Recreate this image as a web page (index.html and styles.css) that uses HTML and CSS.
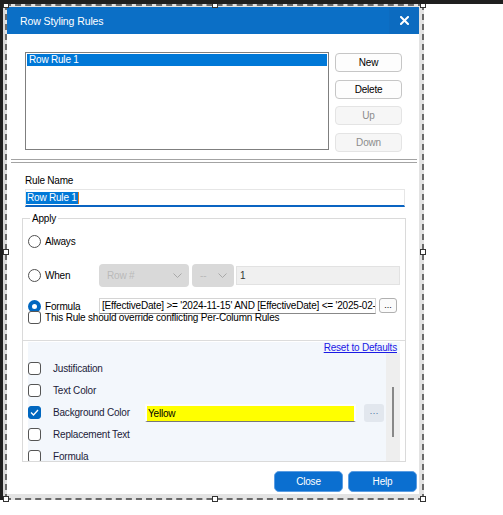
FILE: index.html
```html
<!DOCTYPE html>
<html>
<head>
<meta charset="utf-8">
<link rel="stylesheet" href="styles.css">
</head>
<body>
<div class="screen">
  <div class="stage">
    <div class="leftbar"></div>
    <div class="selection">
      <span class="handle h-tl"></span><span class="handle h-tm"></span><span class="handle h-tr"></span>
      <span class="handle h-ml"></span><span class="handle h-mr"></span>
      <span class="handle h-bl"></span><span class="handle h-bm"></span><span class="handle h-br"></span>
      <div class="dialog">
        <div class="titlebar">
          <span class="title">Row Styling Rules</span>
          <span class="close"><svg width="9" height="9" viewBox="0 0 9 9"><path d="M1 1 L8 8 M8 1 L1 8" stroke="#fff" stroke-width="2" stroke-linecap="square"/></svg></span>
        </div>
        <div class="body">
          <div class="rules-row">
            <div class="listbox"><div class="list-item selected">Row Rule 1</div></div>
            <div class="btn-col">
              <button class="btn">New</button>
              <button class="btn">Delete</button>
              <button class="btn disabled">Up</button>
              <button class="btn disabled">Down</button>
            </div>
          </div>
          <div class="sep"></div>
          <div class="field-label">Rule Name</div>
          <div class="name-input"><span class="sel-text">Row Rule 1</span><span class="caret"></span></div>
          <div class="group">
            <span class="legend">Apply</span>
            <div class="opt row-always"><span class="radio"></span><span class="opt-text">Always</span></div>
            <div class="opt row-when">
              <span class="radio"></span><span class="opt-label">When</span>
              <div class="combo wide"><span>Row #</span><svg width="9" height="5" viewBox="0 0 9 5"><path d="M0.5 0.5 L4.5 4.5 L8.5 0.5" fill="none" stroke="#a9a9a9" stroke-width="1"/></svg></div>
              <div class="combo narrow"><span>--</span><svg width="9" height="5" viewBox="0 0 9 5"><path d="M0.5 0.5 L4.5 4.5 L8.5 0.5" fill="none" stroke="#a9a9a9" stroke-width="1"/></svg></div>
              <div class="value-input">1</div>
            </div>
            <div class="opt row-formula">
              <span class="radio checked"></span><span class="opt-label">Formula</span>
              <div class="formula-input">[EffectiveDate] &gt;= '2024-11-15' AND [EffectiveDate] &lt;= '2025-02-28'</div>
              <button class="mini-btn">...</button>
            </div>
            <div class="opt row-override"><span class="check"></span><span class="opt-text">This Rule should override conflicting Per-Column Rules</span></div>
            <div class="panel">
              <div class="panel-bg">
                <div class="panel-head"><a class="reset">Reset to Defaults</a></div>
                <div class="panel-main">
                  <div class="items">
                    <div class="item"><span class="check"></span><span class="item-label">Justification</span></div>
                    <div class="item"><span class="check"></span><span class="item-label">Text Color</span></div>
                    <div class="item"><span class="check checked"><svg width="9" height="7" viewBox="0 0 9 7"><path d="M1 3.5 L3.5 6 L8 1" fill="none" stroke="#fff" stroke-width="1.3"/></svg></span><span class="item-label">Background Color</span><div class="color-input">Yellow</div><button class="dots">···</button></div>
                    <div class="item"><span class="check"></span><span class="item-label">Replacement Text</span></div>
                    <div class="item"><span class="check"></span><span class="item-label">Formula</span></div>
                  </div>
                  <div class="scrollbar"><div class="thumb"></div></div>
                </div>
              </div>
            </div>
          </div>
          <div class="footer">
            <button class="primary">Close</button>
            <button class="primary">Help</button>
          </div>
        </div>
      </div>
    </div>
  </div>
</div>
</body>
</html>
```

FILE: styles.css
```css
* { box-sizing: border-box; }
html, body { margin: 0; padding: 0; background: #fff; }
body {
  font-family: "Liberation Sans", Arial, sans-serif;
  font-size: 10px;
  letter-spacing: -0.2px;
  color: #000;
}
.screen {
  width: 503px;
  height: 515px;
  border-top: 4px solid #1f1f1f;
  overflow: hidden;
}
.stage { display: flex; align-items: flex-start; }
.leftbar {
  width: 5px;
  height: 496px;
  border-left: 3px solid #1f1f1f;
  background: #d6d6d6;
}
.selection {
  position: relative;
  width: 419px;
  height: 496px;
  border: 2px dashed #6a6a6a;
  padding: 1px 3px 4px 0;
  background: #e3e3e3;
}
.handle {
  position: absolute;
  width: 6px;
  height: 6px;
  background: #fff;
  border: 1px solid #333;
  z-index: 2;
}
.h-tl { left: -4px; top: -4px; }
.h-tm { left: 205px; top: -4px; }
.h-tr { right: -4px; top: -4px; }
.h-ml { left: -4px; top: 243px; }
.h-mr { right: -4px; top: 243px; }
.h-bl { left: -4px; bottom: -4px; }
.h-bm { left: 205px; bottom: -4px; }
.h-br { right: -4px; bottom: -4px; }

.dialog {
  width: 412px;
  height: 487px;
  background: #fff;
  overflow: hidden;
}
.titlebar {
  height: 27px;
  background: #0b6fc6;
  display: flex;
  align-items: center;
  justify-content: space-between;
  color: #fff;
}
.title { padding-left: 13px; font-size: 10.5px; letter-spacing: -0.1px; }
.close {
  width: 30px;
  height: 27px;
  display: flex;
  align-items: center;
  justify-content: center;
  background: #0c6bc0;
}
.rules-row {
  display: flex;
  margin-top: 18px;
  padding-left: 18px;
  align-items: flex-start;
}
.listbox {
  width: 304px;
  height: 98px;
  border: 1px solid #7f7f7f;
  padding: 1px;
}
.list-item {
  height: 12px;
  line-height: 12px;
  padding-left: 2px;
}
.list-item.selected { background: #0078d7; color: #fff; }
.btn-col {
  margin-left: 6px;
  width: 67px;
  padding-top: 1px;
  display: flex;
  flex-direction: column;
}
.btn {
  height: 19px;
  border: 1px solid #c6c6c6;
  border-radius: 4px;
  background: #fdfdfd;
  font-family: inherit;
  font-size: 10px;
  letter-spacing: -0.2px;
  color: #000;
  padding: 0;
}
.btn + .btn { margin-top: 8px; }
.btn:nth-child(3) { margin-top: 7px; }
.btn.disabled { background: #f6f6f6; border-color: #e4e4e4; color: #8c8c8c; }

.sep {
  margin: 7px 0 0 4px;
  width: 406px;
  height: 4px;
  border-top: 1px solid #a3a3a3;
  border-bottom: 1px solid #a3a3a3;
}
.field-label {
  margin-top: 11px;
  padding-left: 18px;
  line-height: 13px;
}
.name-input {
  margin: 2px 0 0 18px;
  width: 380px;
  height: 18px;
  border: 1px solid #e6e6e6;
  border-bottom: 2px solid #0a64c2;
  display: flex;
  align-items: center;
}
.sel-text {
  background: #0078d7;
  color: #fff;
  line-height: 12px;
  padding: 0 1px 0 1px;
}
.caret { width: 1px; height: 12px; background: #e07a20; }

.group {
  position: relative;
  margin: 11px 0 0 15px;
  width: 384px;
  border: 1px solid #dadada;
}
.legend {
  position: absolute;
  left: 7px;
  top: -7px;
  padding: 0 2px;
  background: #fff;
  line-height: 13px;
}
.opt {
  display: flex;
  align-items: center;
  padding-left: 5px;
}
.row-always { margin-top: 14px; height: 17px; }
.row-when { margin-top: 14px; height: 23px; }
.row-formula { margin-top: 11px; height: 16px; }
.row-override { margin-top: -3px; height: 13px; }
.radio {
  width: 13px;
  height: 13px;
  border: 1px solid #505050;
  border-radius: 50%;
  background: #fff;
  flex: none;
}
.radio.checked {
  border: 4px solid #0067c0;
  background: #fff;
}
.opt-text { margin-left: 4px; }
.opt-label { margin-left: 4px; width: 54px; flex: none; }
.combo {
  height: 23px;
  background: #d9d9d9;
  border-radius: 4px;
  color: #b9b9b9;
  display: flex;
  align-items: center;
  justify-content: space-between;
  padding: 0 7px 0 8px;
  flex: none;
}
.combo.wide { width: 90px; }
.combo.narrow { width: 42px; margin-left: 3px; }
.value-input {
  margin-left: 2px;
  width: 164px;
  height: 19px;
  background: #f0f0f0;
  border: 1px solid #e2e2e2;
  color: #333;
  line-height: 17px;
  padding-left: 3px;
}
.formula-input {
  width: 277px;
  height: 16px;
  border: 1px solid #d4d4d4;
  border-bottom-color: #888;
  line-height: 14px;
  padding-left: 2px;
  white-space: nowrap;
  overflow: hidden;
  flex: none;
}
.mini-btn {
  margin-left: 3px;
  width: 18px;
  height: 15px;
  border: 1px solid #b0b0b0;
  border-radius: 3px;
  background: #fbfbfb;
  font-family: inherit;
  font-size: 9px;
  line-height: 9px;
  padding: 0;
  align-self: flex-start;
}
.check {
  width: 13px;
  height: 13px;
  border: 1px solid #555;
  border-radius: 3px;
  background: #fff;
  flex: none;
  display: flex;
  align-items: center;
  justify-content: center;
}
.check.checked { background: #0067c0; border-color: #0067c0; }

.panel {
  margin-top: 16px;
  border-top: 1px solid #dcdcdc;
  padding: 1px 5px 0 5px;
}
.panel-bg {
  height: 119px;
  background: #f3f7fc;
  overflow: hidden;
}
.panel-head {
  height: 11px;
  display: flex;
  justify-content: flex-end;
  padding-right: 3px;
}
.reset {
  color: #1a1ae6;
  text-decoration: underline;
  line-height: 11px;
}
.panel-main { display: flex; height: 108px; }
.items { flex: 1; padding-top: 4px; overflow: hidden; }
.item {
  height: 22px;
  display: flex;
  align-items: center;
  color: #1c1c3a;
}
.item-label { margin-left: 12px; width: 92px; flex: none; }
.color-input {
  margin-top: 2px;
  width: 211px;
  height: 18px;
  background: #ffff00;
  border: 2px solid #fcfcfc;
  border-bottom: 1px solid #777;
  color: #000;
  line-height: 15px;
  padding-left: 1px;
  flex: none;
}
.dots {
  margin: 2px 0 0 8px;
  width: 20px;
  height: 18px;
  border: none;
  border-radius: 3px;
  background: #e2e7ee;
  color: #4d6e9e;
  font-size: 9px;
  padding: 0;
  font-family: inherit;
}
.scrollbar {
  width: 14px;
  background: #eeeeee;
  padding-top: 34px;
}
.thumb {
  margin-left: 6px;
  width: 2px;
  height: 50px;
  background: #888;
}
.footer {
  display: flex;
  justify-content: flex-end;
  gap: 5px;
  margin-top: 9px;
  padding-right: 2px;
}
.primary {
  width: 69px;
  height: 21px;
  background: #0b6fd0;
  border: 1px solid #5c9de2;
  border-radius: 5px;
  color: #fff;
  font-family: inherit;
  font-size: 10px;
  letter-spacing: -0.2px;
  padding: 0;
}
```
